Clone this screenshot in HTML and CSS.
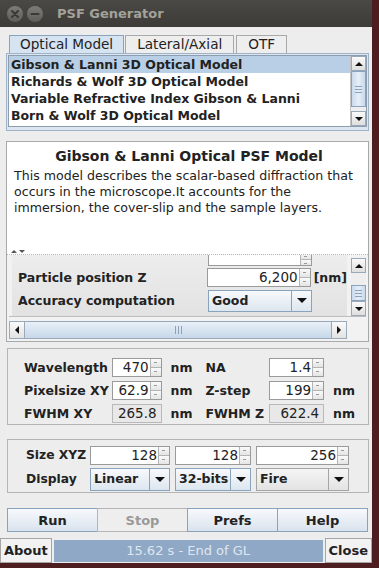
FILE: index.html
```html
<!DOCTYPE html>
<html lang="en">
  <head>
    <meta charset="UTF-8" />
    <title>PSF Generator</title>
    <link rel="stylesheet" href="styles.css">
  </head>
  <body>
    <div class="window">
      <div class="titlebar">
        <span class="wbtn close">
          <svg width="16" height="16" viewBox="0 0 16 16"><path d="M5 5l6 6M11 5l-6 6" stroke="#3a3935" stroke-width="2" stroke-linecap="round"/></svg>
        </span>
        <span class="wbtn mini">
          <svg width="16" height="16" viewBox="0 0 16 16"><path d="M4.5 8h7" stroke="#3a3935" stroke-width="2" stroke-linecap="round"/></svg>
        </span>
        <span class="title">PSF Generator</span>
      </div>

      <div class="content">
        <div class="tabs">
          <span class="tab selected">Optical Model</span>
          <span class="tab">Lateral/Axial</span>
          <span class="tab">OTF</span>
        </div>
        <div class="tabpanel">
          <div class="list">
            <ul class="items">
              <li class="sel">Gibson &amp; Lanni 3D Optical Model</li>
              <li>Richards &amp; Wolf 3D Optical Model</li>
              <li>Variable Refractive Index Gibson &amp; Lanni</li>
              <li>Born &amp; Wolf 3D Optical Model</li>
            </ul>
            <div class="vscroll">
              <span class="arrow up"></span>
              <span class="thumb long"><i></i><i></i><i></i></span>
              <span class="track"></span>
              <span class="arrow down"></span>
            </div>
          </div>
        </div>

        <div class="descbox">
          <div class="desc">
            <h2>Gibson &amp; Lanni Optical PSF Model</h2>
            <p>This model describes the scalar-based diffraction that<br>occurs in the microscope.It accounts for the<br>immersion, the cover-slip and the sample layers.</p>
          </div>
          <div class="divider"><span class="tri up"></span><span class="tri down"></span></div>
          <div class="scrollarea">
            <div class="paramview">
              <div class="params">
                <div class="prow cut">
                  <span class="plabel"></span>
                  <span class="spinner wide"><span class="val"></span><span class="spin"><b></b><b></b></span></span>
                </div>
                <div class="prow">
                  <span class="plabel">Particle position Z</span>
                  <span class="spinner wide"><span class="val">6,200</span><span class="spin"><b></b><b></b></span></span>
                  <span class="unit">[nm]</span>
                </div>
                <div class="prow">
                  <span class="plabel">Accuracy computation</span>
                  <span class="combo wide"><span class="val">Good</span><span class="drop"></span></span>
                </div>
              </div>
              <div class="vscroll small">
                <span class="arrow up"></span>
                <span class="track short"></span>
                <span class="thumb"><i></i><i></i><i></i></span>
                <span class="arrow down"></span>
              </div>
            </div>
            <div class="hscroll">
              <span class="harrow left"></span>
              <span class="hthumb"><i></i><i></i><i></i></span>
              <span class="harrow right"></span>
            </div>
          </div>
        </div>

        <div class="panel optics">
          <div class="orow">
            <span class="olabel">Wavelength</span>
            <span class="spinner"><span class="val">470</span><span class="spin"><b></b><b></b></span></span>
            <span class="unit">nm</span>
            <span class="olabel second">NA</span>
            <span class="spinner"><span class="val">1.4</span><span class="spin"><b></b><b></b></span></span>
            <span class="unit"></span>
          </div>
          <div class="orow">
            <span class="olabel">Pixelsize XY</span>
            <span class="spinner"><span class="val">62.9</span><span class="spin"><b></b><b></b></span></span>
            <span class="unit">nm</span>
            <span class="olabel second">Z-step</span>
            <span class="spinner"><span class="val">199</span><span class="spin"><b></b><b></b></span></span>
            <span class="unit">nm</span>
          </div>
          <div class="orow">
            <span class="olabel">FWHM XY</span>
            <span class="field">265.8</span>
            <span class="unit">nm</span>
            <span class="olabel second">FWHM Z</span>
            <span class="field">622.4</span>
            <span class="unit">nm</span>
          </div>
        </div>

        <div class="panel sizes">
          <div class="srow">
            <span class="slabel">Size XYZ</span>
            <span class="spinner s1"><span class="val">128</span><span class="spin"><b></b><b></b></span></span>
            <span class="spinner s2"><span class="val">128</span><span class="spin"><b></b><b></b></span></span>
            <span class="spinner s3"><span class="val">256</span><span class="spin"><b></b><b></b></span></span>
          </div>
          <div class="srow">
            <span class="slabel">Display</span>
            <span class="combo s1"><span class="val">Linear</span><span class="drop"></span></span>
            <span class="combo s2"><span class="val">32-bits</span><span class="drop"></span></span>
            <span class="combo s3 flat"><span class="val">Fire</span><span class="drop"></span></span>
          </div>
        </div>

        <div class="buttons">
          <button class="btn run">Run</button>
          <button class="btn stop">Stop</button>
          <button class="btn">Prefs</button>
          <button class="btn">Help</button>
        </div>
      </div>

      <div class="status">
        <button class="plain">About</button>
        <div class="statusbar">15.62 s - End of GL</div>
        <button class="plain">Close</button>
      </div>
    </div>
  </body>
</html>
```

FILE: styles.css
```css
body {
  margin: 0;
  background: #4d1d1f;
  font-family: "DejaVu Sans", Verdana, sans-serif;
  font-size: 12.5px;
  color: #222;
}
.window {
  width: 372px;
  height: 563px;
  background: #ededed;
  display: flex;
  flex-direction: column;
}
.titlebar {
  height: 28px;
  background: linear-gradient(#4a4945, #3c3b37);
  display: flex;
  align-items: center;
  padding-left: 7px;
}
.wbtn {
  width: 16px;
  height: 16px;
  border-radius: 50%;
  background: linear-gradient(#7d7c77, #5e5d59);
  display: flex;
  align-items: center;
  justify-content: center;
  margin-right: 4px;
}
.title {
  margin-left: 10px;
  font-weight: bold;
  font-size: 13px;
  color: #a3a19a;
}
.content {
  flex: 1;
  padding: 8px 3px 0 6px;
  display: flex;
  flex-direction: column;
}

/* tabs */
.tabs {
  display: flex;
  height: 18px;
  padding-left: 3px;
  font-size: 13.6px;
}
.tab {
  border: 1px solid #a9a9a9;
  border-bottom: none;
  padding: 0 11px;
  line-height: 17px;
  background: #eeeeee;
  margin-right: 2px;
}
.tab.selected {
  background: #d6e3f1;
  border-color: #8aa3bd;
  padding: 0 10px;
  margin-right: 1px;
}
.tabpanel {
  border: 1px solid #9fb2c7;
  background: #dce6f1;
  padding: 1px;
  height: 74px;
}
.list {
  display: flex;
  background: #fff;
  border: 1px solid #8c9db0;
  height: 72px;
  box-sizing: border-box;
}
.items {
  flex: 1;
  list-style: none;
  margin: 0;
  padding: 0;
  font-weight: bold;
}
.items li {
  height: 17px;
  line-height: 17px;
  padding-left: 2px;
  white-space: nowrap;
}
.items li.sel {
  background: #b8cfe5;
}

/* scrollbars */
.vscroll {
  width: 15px;
  display: flex;
  flex-direction: column;
  border-left: 1px solid #c4c4c4;
  background: #eeeeee;
}
.arrow {
  height: 15px;
  border: 1px solid #9aa9b9;
  box-sizing: border-box;
  background: linear-gradient(#fafafa, #dedede);
  display: flex;
  align-items: center;
  justify-content: center;
}
.arrow::after {
  content: "";
  border-left: 4px solid transparent;
  border-right: 4px solid transparent;
}
.arrow.up::after { border-bottom: 4px solid #111; }
.arrow.down::after { border-top: 4px solid #111; }
.thumb {
  height: 32px;
  border: 1px solid #8aa3bd;
  background: linear-gradient(90deg, #c9daec, #e6eef7, #c9daec);
  display: flex;
  flex-direction: column;
  justify-content: center;
  align-items: center;
  gap: 2px;
}
.thumb.long {
  height: 34px;
}
.thumb i {
  display: block;
  width: 7px;
  height: 1px;
  background: #8aa3bd;
}
.track {
  flex: 1;
}
.track.short {
  flex: 0 0 12px;
}
.vscroll.small .thumb {
  flex: 1;
  height: auto;
}

/* description & parameters */
.descbox {
  margin-top: 10px;
  border: 1px solid #a9a9a9;
  background: #fff;
  height: 199px;
  display: flex;
  flex-direction: column;
}
.desc {
  height: 107px;
  flex-shrink: 0;
  padding: 0 4px 0 7px;
  overflow: hidden;
}
.desc h2 {
  margin: 6px 0 4px;
  text-align: center;
  font-size: 14px;
}
.desc p {
  margin: 0;
  font-size: 12.6px;
  line-height: 16px;
  white-space: nowrap;
}
.divider {
  height: 5px;
  flex-shrink: 0;
  border-bottom: 1px dotted #b5b5b5;
  display: flex;
  align-items: center;
  padding-left: 4px;
  gap: 2px;
}
.tri {
  border-left: 3px solid transparent;
  border-right: 3px solid transparent;
}
.tri.up { border-bottom: 3px solid #555; }
.tri.down { border-top: 3px solid #555; }
.scrollarea {
  flex: 1;
  display: flex;
  flex-direction: column;
  padding: 0 2px 2px 2px;
  background: #f2f2f2;
}
.paramview {
  height: 61px;
  flex-shrink: 0;
  display: flex;
  border-bottom: 1px solid #bdbdbd;
  margin-bottom: 4px;
}
.params {
  flex: 1;
  background: linear-gradient(#ededed, #e2e2e2);
  margin-left: 3px;
  padding: 0 0 4px 6px;
  display: flex;
  flex-direction: column;
  justify-content: flex-end;
  overflow: hidden;
}
.prow {
  display: flex;
  align-items: center;
  height: 23px;
  flex-shrink: 0;
}
.prow.cut {
  height: 11px;
  align-items: flex-end;
}
.prow.cut .spinner {
  height: 14px;
}
.plabel {
  width: 190px;
  font-weight: bold;
}
.vscroll.small {
  margin-left: 4px;
  border-left: none;
  margin-top: 3px;
}
.hscroll {
  height: 16px;
  margin-right: 19px;
  display: flex;
  border: 1px solid #9aa9b9;
  background: #eee;
}
.harrow {
  width: 14px;
  background: linear-gradient(#fafafa, #e2e2e2);
  border-right: 1px solid #9aa9b9;
  display: flex;
  align-items: center;
  justify-content: center;
}
.harrow.right {
  border-right: none;
  border-left: 1px solid #9aa9b9;
}
.harrow::after {
  content: "";
  border-top: 4px solid transparent;
  border-bottom: 4px solid transparent;
}
.harrow.left::after { border-right: 4px solid #111; }
.harrow.right::after { border-left: 4px solid #111; }
.hthumb {
  flex: 1;
  background: linear-gradient(#e8eff7, #c7d8ea);
  display: flex;
  justify-content: center;
  align-items: center;
  gap: 2px;
}
.hthumb i {
  width: 1px;
  height: 8px;
  background: #8aa3bd;
}

/* inputs */
.spinner {
  display: flex;
  height: 19px;
  width: 50px;
  border: 1px solid #9a9a9a;
  background: #fff;
  box-sizing: border-box;
}
.spinner.wide {
  width: 104px;
}
.spinner .val {
  flex: 1;
  text-align: right;
  line-height: 17px;
  padding-right: 1px;
  font-size: 13.5px;
}
.spin {
  width: 10px;
  display: flex;
  flex-direction: column;
  border-left: 1px solid #b5b5b5;
}
.spin b {
  flex: 1;
  background: linear-gradient(#fafafa, #e4e4e4);
  position: relative;
}
.spin b + b {
  border-top: 1px solid #b5b5b5;
}
.spin b::after {
  content: "";
  position: absolute;
  left: 3px;
  top: 3px;
  width: 3px;
  height: 1px;
  background: #999;
}
.field {
  width: 50px;
  height: 19px;
  box-sizing: border-box;
  border: 1px solid #b9b9b9;
  background: #e8e8e8;
  text-align: right;
  padding-right: 4px;
  line-height: 17px;
  font-size: 13.5px;
}
.combo {
  display: flex;
  height: 22px;
  width: 104px;
  box-sizing: border-box;
  border: 1px solid #8aa3bd;
  background: linear-gradient(#f7f9fc, #dde6ef);
  white-space: nowrap;
}
.combo .val {
  flex: 1;
  font-weight: bold;
  line-height: 20px;
  padding-left: 3px;
  overflow: hidden;
}
.combo .drop {
  width: 19px;
  flex-shrink: 0;
  border-left: 1px solid #8aa3bd;
  display: flex;
  align-items: center;
  justify-content: center;
}
.combo .drop::after {
  content: "";
  border-left: 5px solid transparent;
  border-right: 5px solid transparent;
  border-top: 5px solid #111;
}
.combo.flat {
  background: linear-gradient(#f5f5f5, #e3e3e3);
  border-color: #a5a5a5;
}
.combo.flat .drop {
  border-left-color: #a5a5a5;
}
.unit {
  font-weight: bold;
  margin-left: 3px;
}

/* panels */
.panel {
  border: 1px solid #b5b5b5;
  margin-left: 1px;
}
.optics {
  margin-top: 6px;
  padding: 7px 0 0 16px;
  box-sizing: border-box;
  height: 77px;
}
.orow {
  display: flex;
  align-items: center;
  height: 23px;
  white-space: nowrap;
}
.orow .olabel {
  width: 88px;
  font-weight: bold;
}
.orow .olabel.second {
  width: 64px;
}
.orow .olabel.second + .spinner,
.orow .olabel.second + .field {
  width: 55px;
}
.orow .unit {
  width: 35px;
  margin-left: 9px;
}
.sizes {
  margin-top: 14px;
  height: 54px;
  box-sizing: border-box;
  padding: 3px 0 0 18px;
}
.srow {
  display: flex;
  align-items: center;
  height: 24px;
  gap: 5px;
  white-space: nowrap;
}
.srow .slabel {
  width: 59px;
  font-weight: bold;
  font-size: 12.3px;
}
.srow .s1 { width: 80px; }
.srow .s2 { width: 76px; }
.srow .s3 { width: 93px; }
.srow .combo { height: 23px; }

/* buttons */
.buttons {
  display: flex;
  margin-top: 15px;
  height: 24px;
  margin-left: 1px;
}
.btn {
  width: 91px;
  font-family: inherit;
  font-size: 13px;
  font-weight: bold;
  color: #222;
  border: 1px solid #8aa3bd;
  background: linear-gradient(#f7f9fc, #d9e3ee);
  margin: 0;
  margin-right: -1px;
}
.btn.stop {
  color: #999;
  border-color: #b5b5b5;
  background: #eeeeee;
}
.status {
  display: flex;
  height: 25px;
  margin-top: 6px;
  align-items: stretch;
}
.plain {
  font-family: inherit;
  font-size: 13px;
  font-weight: bold;
  color: #222;
  background: #f2f2f2;
  border: 1px solid #a5a5a5;
  padding: 0 3px;
  margin: 0;
}
.statusbar {
  flex: 1;
  margin: 2px 2px 1px 2px;
  background: #8fa8c6;
  color: #dfe6ef;
  text-align: center;
  line-height: 22px;
  font-size: 13px;
}
```
